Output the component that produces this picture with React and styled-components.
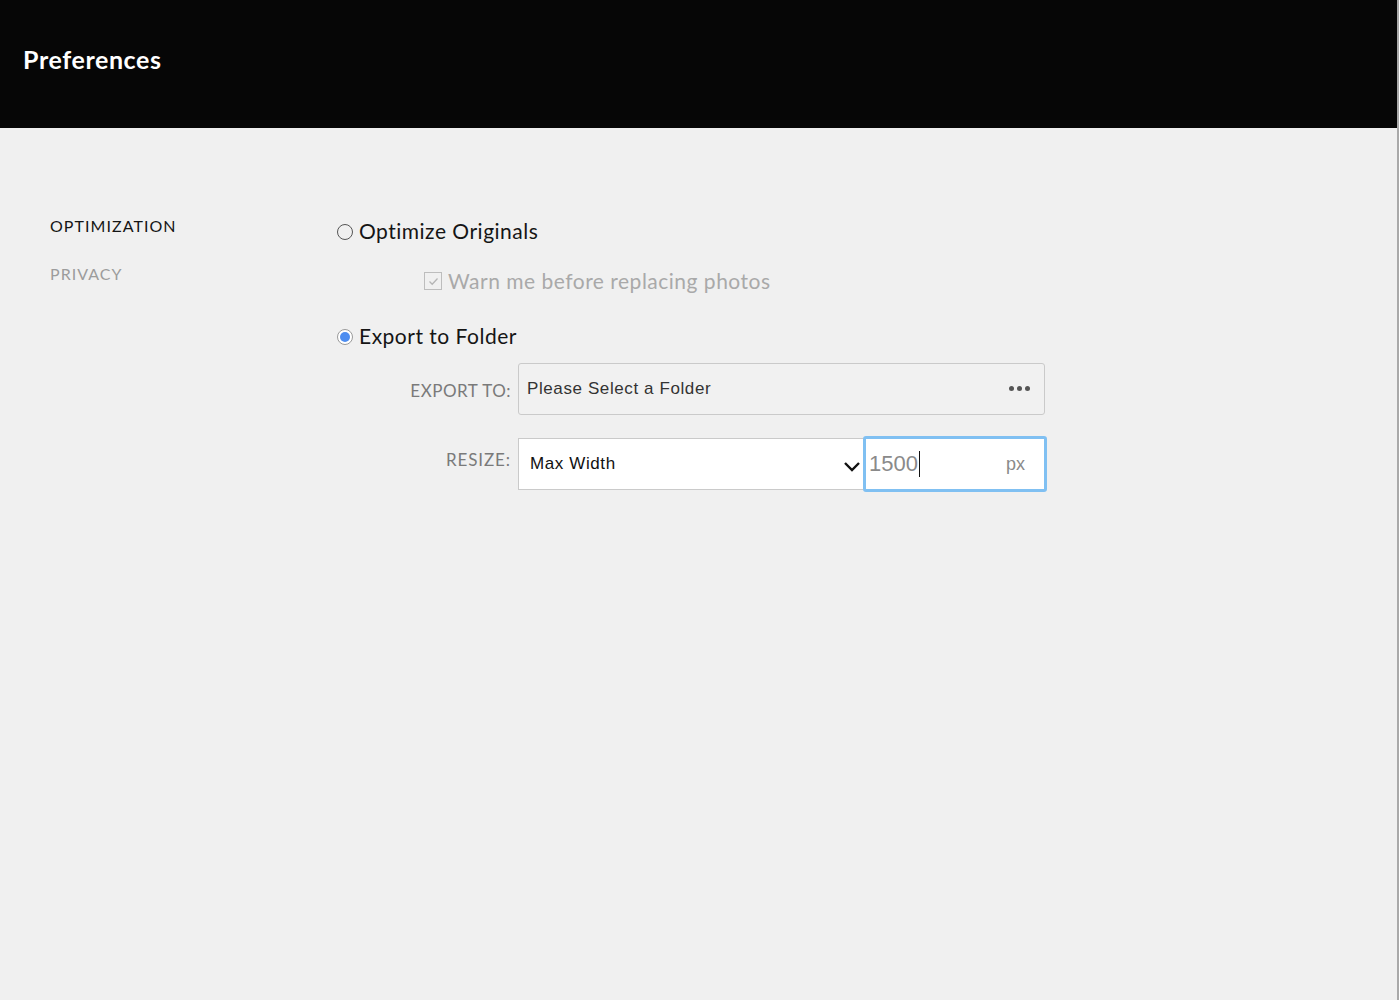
import React, { useState } from 'react';
import styled, { createGlobalStyle } from 'styled-components';

const GlobalStyle = createGlobalStyle`
  html, body {
    margin: 0;
    padding: 0;
    background: #f0f0f0;
  }
  body {
    font-family: "Lato", "Open Sans", sans-serif;
  }
`;

const Window = styled.div`
  width: 1397px;
  min-height: 1000px;
  border-right: 2px solid #a9a9a9;
  background: #f0f0f0;
  display: flex;
  flex-direction: column;
`;

const Header = styled.header`
  height: 128px;
  background: #060606;
  display: flex;
  align-items: center;
  padding-left: 23px;
  box-sizing: border-box;
`;

const Title = styled.h1`
  margin: 0 0 11px;
  color: #fff;
  font-size: 25px;
  font-weight: 700;
  letter-spacing: 0.6px;
`;

const Body = styled.div`
  display: flex;
  padding-top: 88px;
`;

const Sidebar = styled.nav`
  width: 337px;
  padding-left: 50px;
  box-sizing: border-box;
  display: flex;
  flex-direction: column;
  gap: 28px;
`;

const NavItem = styled.div`
  font-size: 16px;
  line-height: 20px;
  letter-spacing: 1.05px;
  color: ${(p) => (p.$active ? '#151515' : '#9c9c9c')};
  cursor: pointer;
`;

const Main = styled.div`
  display: flex;
  flex-direction: column;
  padding-top: 1px;
`;

const OptionRow = styled.label`
  display: flex;
  align-items: center;
  gap: 6px;
  height: 26px;
  font-size: 21px;
  letter-spacing: 0.5px;
  color: #151515;
  cursor: pointer;
  margin-bottom: ${(p) => p.$mb || 0}px;
`;

const Radio = styled.span`
  width: 14px;
  height: 14px;
  border-radius: 50%;
  border: 1px solid ${(p) => (p.$checked ? '#9a9a9a' : '#555')};
  background: ${(p) => (p.$checked ? '#fff' : 'transparent')};
  display: flex;
  align-items: center;
  justify-content: center;
  margin-top: 3px;

  &::after {
    content: '';
    display: ${(p) => (p.$checked ? 'block' : 'none')};
    width: 10px;
    height: 10px;
    border-radius: 50%;
    background: #4d8df0;
  }
`;

const SubOption = styled.label`
  display: flex;
  align-items: center;
  gap: 6px;
  height: 26px;
  margin-left: 87px;
  margin-bottom: 29px;
  font-size: 21px;
  letter-spacing: 0.5px;
  color: #a9a9a9;
`;

const CheckBox = styled.span`
  width: 18px;
  height: 18px;
  border: 1px solid #bdbdbd;
  box-sizing: border-box;
  display: flex;
  align-items: center;
  justify-content: center;
  margin-top: 2px;
`;

const FormGrid = styled.div`
  display: grid;
  grid-template-columns: 181px 345px 184px;
  row-gap: 21px;
  margin-top: 15px;
`;

const FieldLabel = styled.div`
  font-size: 17px;
  letter-spacing: ${(p) => p.$ls || 0.5}px;
  color: #7a7a7a;
  text-align: right;
  padding-right: 7px;
  align-self: center;
  margin-top: ${(p) => p.$mt || 0}px;
`;

const FolderBox = styled.div`
  grid-column: span 2;
  width: 527px;
  height: 52px;
  box-sizing: border-box;
  border: 1px solid #cacaca;
  border-radius: 3px;
  background: #f1f1f1;
  display: flex;
  align-items: center;
  justify-content: space-between;
  padding: 0 14px 0 8px;
  font-family: "Liberation Sans", Arial, sans-serif;
  font-size: 17px;
  letter-spacing: 0.6px;
  color: #333;
  cursor: pointer;
`;

const Dots = styled.span`
  display: flex;
  gap: 3px;
  margin-top: -2px;

  span {
    width: 5px;
    height: 5px;
    border-radius: 50%;
    background: #555;
  }
`;

const SelectBox = styled.div`
  height: 52px;
  margin-top: 2px;
  box-sizing: border-box;
  border: 1px solid #cacaca;
  border-right: none;
  background: #fff;
  display: flex;
  align-items: center;
  justify-content: space-between;
  padding: 0 2px 0 11px;
  font-family: "Liberation Sans", Arial, sans-serif;
  font-size: 17px;
  letter-spacing: 0.6px;
  color: #111;
`;

const Chevron = styled.svg`
  margin-top: 4px;
`;

const NumberField = styled.div`
  height: 56px;
  box-sizing: border-box;
  border: 3px solid #80c0f2;
  border-radius: 3px;
  background: #fff;
  display: flex;
  align-items: center;
  justify-content: space-between;
  padding: 0 19px 0 3px;
  font-family: "Liberation Sans", Arial, sans-serif;
  color: #8a8a8a;
`;

const NumberValue = styled.span`
  font-size: 22px;
  display: flex;
  align-items: center;

  &::after {
    content: '';
    width: 1.5px;
    height: 26px;
    background: #111;
    margin-left: 1px;
  }
`;

const Unit = styled.span`
  font-size: 18px;
`;

export default function App() {
  const [mode, setMode] = useState('export');

  return (
    <>
      <GlobalStyle />
      <Window>
        <Header>
          <Title>Preferences</Title>
        </Header>
        <Body>
          <Sidebar>
            <NavItem $active>OPTIMIZATION</NavItem>
            <NavItem>PRIVACY</NavItem>
          </Sidebar>
          <Main>
            <OptionRow $mb={24} onClick={() => setMode('optimize')}>
              <Radio $checked={mode === 'optimize'} />
              Optimize Originals
            </OptionRow>
            <SubOption>
              <CheckBox>
                <svg width="11" height="9" viewBox="0 0 11 9">
                  <path d="M1.5 4.5 L4.2 7.2 L9.5 1.5" fill="none" stroke="#b5b5b5" strokeWidth="1.3" />
                </svg>
              </CheckBox>
              Warn me before replacing photos
            </SubOption>
            <OptionRow onClick={() => setMode('export')}>
              <Radio $checked={mode === 'export'} />
              Export to Folder
            </OptionRow>
            <FormGrid>
              <FieldLabel $mt={2}>EXPORT TO:</FieldLabel>
              <FolderBox>
                Please Select a Folder
                <Dots>
                  <span />
                  <span />
                  <span />
                </Dots>
              </FolderBox>
              <FieldLabel $mt={-10} $ls={0.9}>RESIZE:</FieldLabel>
              <SelectBox>
                Max Width
                <Chevron width="18" height="12" viewBox="0 0 18 12">
                  <path d="M2 3 L9 10 L16 3" fill="none" stroke="#111" strokeWidth="2.4" />
                </Chevron>
              </SelectBox>
              <NumberField>
                <NumberValue>1500</NumberValue>
                <Unit>px</Unit>
              </NumberField>
            </FormGrid>
          </Main>
        </Body>
      </Window>
    </>
  );
}
